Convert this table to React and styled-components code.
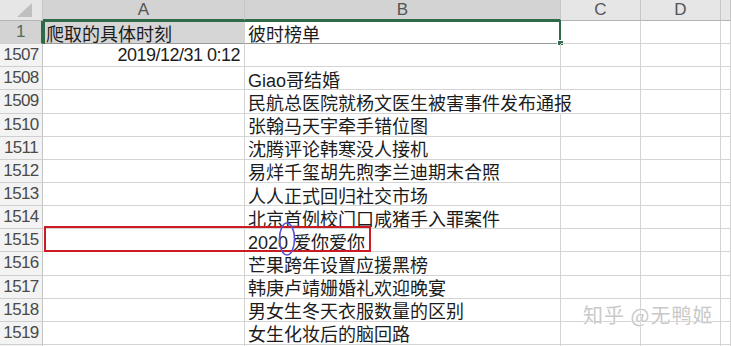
import React from "react";
import styled, { createGlobalStyle, css } from "styled-components";

const GREEN = "#2f6b4a";
const FONT = `"Liberation Sans", "Noto Sans CJK SC", sans-serif`;

const GlobalStyle = createGlobalStyle`
    html, body {
        margin: 0;
        padding: 0;
        background: #ffffff;
        overflow: hidden;
    }
    body {
        width: 731px;
        height: 346px;
        font-family: ${FONT};
    }
`;

const Page = styled.div`
    position: relative;
    width: 731px;
    height: 346px;
    overflow: hidden;
`;

const Sheet = styled.div`
    display: grid;
    grid-template-columns: 43px 202px 316px 80px 80px 1fr;
    grid-template-rows: 21px;
    grid-auto-rows: 23.15px;
`;

const Corner = styled.div`
    position: relative;
    background: #e6e6e6;
    border-right: 1px solid #c6c6c6;
    border-bottom: 1px solid #b4b4b4;

    &::after {
        content: "";
        position: absolute;
        right: 10px;
        bottom: 3px;
        width: 15px;
        height: 14px;
        background: #bfbfbf;
        clip-path: polygon(100% 0, 100% 100%, 0 100%);
    }
`;

const ColHeader = styled.div`
    display: flex;
    align-items: center;
    justify-content: center;
    font-size: 17px;
    color: #555;
    background: ${p => (p.$selected ? "#d3d3d3" : "#e6e6e6")};
    border-right: 1px solid #c6c6c6;
    border-bottom: ${p => (p.$selected ? `2px solid ${GREEN}` : "1px solid #b4b4b4")};
    padding-top: ${p => (p.$selected ? "1px" : "0")};
`;

const RowHeader = styled.div`
    display: flex;
    align-items: center;
    justify-content: center;
    font-size: 17px;
    letter-spacing: -0.6px;
    color: ${p => (p.$selected ? "#4b6e5b" : "#4a4a4a")};
    background: ${p => (p.$selected ? "#d3d3d3" : "#f3f3f3")};
    border-right: ${p => (p.$selected ? `2px solid ${GREEN}` : "1px solid #c6c6c6")};
    border-bottom: 1px solid #cfcfcf;
`;

const Cell = styled.div`
    position: relative;
    display: flex;
    align-items: center;
    justify-content: ${p => (p.$align === "right" ? "flex-end" : "flex-start")};
    padding: 1px 4px 0 3px;
    font-size: 18px;
    letter-spacing: ${p => (p.$align === "right" ? "-0.5px" : "0")};
    color: #1c1c1c;
    white-space: nowrap;
    overflow: visible;
    background: ${p => (p.$shade ? "#d6d6d6" : "transparent")};
    border-right: 1px solid ${p => (p.$spill ? "transparent" : "#d4d4d4")};
    border-bottom: 1px solid ${p => (p.$strong ? "#9a9a9a" : "#d4d4d4")};
    z-index: ${p => (p.$spill ? 1 : 0)};

    ${p =>
        p.$sel &&
        css`
            &::after {
                content: "";
                position: absolute;
                left: ${p.$sel === "left" ? "0" : "-1px"};
                right: -1px;
                top: -1px;
                bottom: -1px;
                border-top: 2px solid ${GREEN};
                ${p.$sel === "left" && `border-left: 2px solid ${GREEN};`}
                ${p.$sel === "right" && `border-right: 2px solid ${GREEN};`}
                pointer-events: none;
            }
        `}
`;

const FillHandle = styled.span`
    position: absolute;
    right: -4px;
    bottom: -3px;
    width: 5px;
    height: 4px;
    background: ${GREEN};
    border: 1px solid #ffffff;
    z-index: 3;
`;

const RedBox = styled.div`
    position: absolute;
    left: 44px;
    top: 226px;
    width: 323px;
    height: 22px;
    border: 2px solid #cc1a22;
`;

const Circle = styled.svg`
    position: absolute;
    left: 277px;
    top: 221px;
`;

const Watermark = styled.div`
    position: absolute;
    left: 583px;
    top: 300px;
    font-family: "Noto Sans CJK SC", sans-serif;
    font-size: 20px;
    letter-spacing: 1px;
    color: #c9c9c9;
    text-shadow: 0 0 1px #ffffff, 0 0 2px #ffffff;
    white-space: nowrap;
`;

const columns = ["A", "B", "C", "D", ""];

const rows = [
    ["1507", "2019/12/31 0:12", ""],
    ["1508", "", "Giao哥结婚"],
    ["1509", "", "民航总医院就杨文医生被害事件发布通报"],
    ["1510", "", "张翰马天宇牵手错位图"],
    ["1511", "", "沈腾评论韩寒没人接机"],
    ["1512", "", "易烊千玺胡先煦李兰迪期末合照"],
    ["1513", "", "人人正式回归社交市场"],
    ["1514", "", "北京首例校门口咸猪手入罪案件"],
    ["1515", "", "2020 爱你爱你"],
    ["1516", "", "芒果跨年设置应援黑榜"],
    ["1517", "", "韩庚卢靖姗婚礼欢迎晚宴"],
    ["1518", "", "男女生冬天衣服数量的区别"],
    ["1519", "", "女生化妆后的脑回路"],
    ["", "", ""],
];

export default function App() {
    return (
        <Page>
            <GlobalStyle />
            <Sheet>
                <Corner />
                {columns.map((c, i) => (
                    <ColHeader key={i} $selected={i < 2}>
                        {c}
                    </ColHeader>
                ))}

                <RowHeader $selected>1</RowHeader>
                <Cell $shade $sel="left" $strong>
                    爬取的具体时刻
                </Cell>
                <Cell $sel="right" $strong>
                    彼时榜单
                    <FillHandle />
                </Cell>
                <Cell />
                <Cell />
                <Cell />

                {rows.map(([n, a, b], i) => (
                    <React.Fragment key={i}>
                        <RowHeader>{n}</RowHeader>
                        <Cell $align="right">{a}</Cell>
                        <Cell $spill={b.length > 17}>{b}</Cell>
                        <Cell />
                        <Cell />
                        <Cell />
                    </React.Fragment>
                ))}
            </Sheet>

            <RedBox />
            <Circle width="20" height="36" viewBox="0 0 20 36">
                <ellipse cx="10" cy="18" rx="7.5" ry="16" fill="none" stroke="#5b52d6" strokeWidth="1.6" />
            </Circle>
            <Watermark>知乎 @无鸭姬</Watermark>
        </Page>
    );
}
